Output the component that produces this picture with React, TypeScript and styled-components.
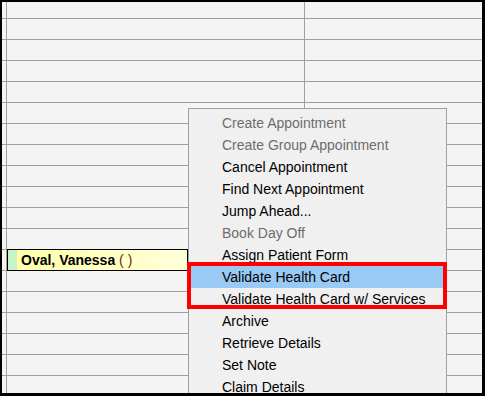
import styled, { createGlobalStyle } from 'styled-components';

const GlobalStyle = createGlobalStyle`
  html, body {
    margin: 0;
    padding: 0;
    background: #ffffff;
  }
  body {
    font-family: 'Liberation Sans', Arial, sans-serif;
  }
`;

const MENU_ITEMS = [
  { label: 'Create Appointment', disabled: true },
  { label: 'Create Group Appointment', disabled: true },
  { label: 'Cancel Appointment' },
  { label: 'Find Next Appointment' },
  { label: 'Jump Ahead...' },
  { label: 'Book Day Off', disabled: true },
  { label: 'Assign Patient Form' },
  { label: 'Validate Health Card', active: true },
  { label: 'Validate Health Card w/ Services' },
  { label: 'Archive' },
  { label: 'Retrieve Details' },
  { label: 'Set Note' },
  { label: 'Claim Details' },
];

const ROW_COUNT = 19;
const APPOINTMENT_ROW = 12;

const Frame = styled.div`
  position: relative;
  box-sizing: border-box;
  width: 485px;
  height: 396px;
  border-style: solid;
  border-color: #000;
  border-width: 2px 3px 3px 2px;
  background: #f4f4f4;
  overflow: hidden;
`;

const Schedule = styled.div`
  display: flex;
  flex-direction: column;
`;

const Row = styled.div<{ $first?: boolean }>`
  display: flex;
  flex-shrink: 0;
  height: ${(p) => (p.$first ? '16px' : '20px')};
  border-bottom: 1px solid #a0a0a0;
`;

const Gutter = styled.div`
  width: 4px;
  border-right: 1px solid #a0a0a0;
`;

const SlotCell = styled.div`
  display: flex;
  align-items: flex-start;
  width: 297px;
  border-right: 1px solid #a0a0a0;
`;

const SideCell = styled.div`
  flex: 1;
`;

const Appointment = styled.div`
  position: relative;
  z-index: 1;
  display: flex;
  box-sizing: border-box;
  width: 181px;
  height: 22px;
  margin-top: -1px;
  border: 1px solid #000;
  background: linear-gradient(to right, #ffffa8, #ffffd8);
`;

const StatusStrip = styled.div`
  width: 9px;
  background: #c8f5c8;
`;

const PatientName = styled.span`
  padding-left: 4px;
  font-size: 14px;
  line-height: 21px;
  font-weight: bold;
  color: #000;
  white-space: nowrap;
`;

const Parens = styled.span`
  font-weight: normal;
  color: #6b2a1a;
`;

const ContextMenu = styled.ul`
  position: absolute;
  left: 186px;
  top: 106px;
  box-sizing: border-box;
  width: 259px;
  margin: 0;
  padding: 3px 2px 2px;
  list-style: none;
  background: #f0f0f0;
  border: 1px solid #a0a0a0;
  z-index: 2;
`;

const MenuItem = styled.li<{ $disabled?: boolean; $active?: boolean }>`
  height: 22px;
  padding-left: 31px;
  font-size: 14px;
  line-height: 23px;
  white-space: nowrap;
  color: ${(p) => (p.$disabled ? '#6d6d6d' : '#000')};
  background: ${(p) => (p.$active ? '#99c9f5' : 'transparent')};
`;

const Callout = styled.div`
  position: absolute;
  left: 185px;
  top: 260px;
  box-sizing: border-box;
  width: 260px;
  height: 47px;
  border: 4px solid #ff0000;
  z-index: 3;
`;

export default function App() {
  return (
    <>
      <GlobalStyle />
      <Frame>
        <Schedule>
          {Array.from({ length: ROW_COUNT }, (_, i) => (
            <Row key={i} $first={i === 0}>
              <Gutter />
              <SlotCell>
                {i === APPOINTMENT_ROW && (
                  <Appointment>
                    <StatusStrip />
                    <PatientName>
                      Oval, Vanessa <Parens>( )</Parens>
                    </PatientName>
                  </Appointment>
                )}
              </SlotCell>
              <SideCell />
            </Row>
          ))}
        </Schedule>
        <ContextMenu>
          {MENU_ITEMS.map((item) => (
            <MenuItem key={item.label} $disabled={item.disabled} $active={item.active}>
              {item.label}
            </MenuItem>
          ))}
        </ContextMenu>
        <Callout />
      </Frame>
    </>
  );
}
